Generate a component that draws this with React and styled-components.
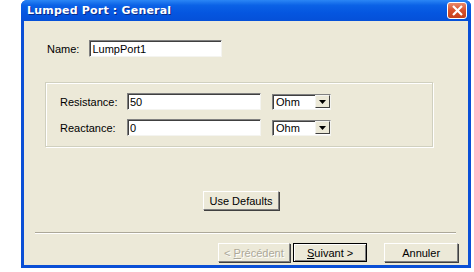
import React from "react";
import styled, { createGlobalStyle } from "styled-components";

const Global = createGlobalStyle`
  html, body {
    margin: 0;
    padding: 0;
    background: #ffffff;
  }
  body {
    font-family: "Liberation Sans", Arial, sans-serif;
    font-size: 11px;
  }
`;

export default function App() {
  return (
    <Page>
      <Global />
      <Window>
        <TitleBar>
          <Title>Lumped Port : General</Title>
          <CloseButton aria-label="Close">
            <svg width="13" height="11" viewBox="0 0 13 11">
              <path d="M2 1 L11 10 M11 1 L2 10" stroke="#fff" strokeWidth="2.2" />
            </svg>
          </CloseButton>
        </TitleBar>

        <Body>
          <NameRow>
            <Label>Name:</Label>
            <TextInput width={133} defaultValue="LumpPort1" />
          </NameRow>

          <GroupBox>
            <FieldRow>
              <Label width={67}>Resistance:</Label>
              <TextInput width={134} defaultValue="50" />
              <Select>
                <span>Ohm</span>
                <DropArrow />
              </Select>
            </FieldRow>
            <FieldRow>
              <Label width={67}>Reactance:</Label>
              <TextInput width={134} defaultValue="0" />
              <Select>
                <span>Ohm</span>
                <DropArrow />
              </Select>
            </FieldRow>
          </GroupBox>

          <CenterRow>
            <Button width={76}>Use Defaults</Button>
          </CenterRow>

          <Separator />

          <Footer>
            <Button width={73} disabled>
              &lt; <u>P</u>récédent
            </Button>
            <Button width={76} primary>
              <u>S</u>uivant &gt;
            </Button>
            <Spacer />
            <Button width={75}>Annuler</Button>
          </Footer>
        </Body>
      </Window>
    </Page>
  );
}

const DropArrow = () => (
  <ArrowBox>
    <svg width="7" height="4" viewBox="0 0 7 4">
      <path d="M0 0 H7 L3.5 4 Z" fill="#000" />
    </svg>
  </ArrowBox>
);

const Page = styled.div`
  width: 474px;
  height: 272px;
  overflow: hidden;
`;

const Window = styled.div`
  margin-left: 21px;
  width: 450px;
  height: 268px;
  display: flex;
  flex-direction: column;
  background: #0a4fd6;
  border-radius: 6px 6px 0 0;
  overflow: hidden;
`;

const TitleBar = styled.div`
  height: 21px;
  display: flex;
  align-items: center;
  justify-content: space-between;
  padding: 0 4px 0 6px;
  background: linear-gradient(
    to bottom,
    #2b86f5 0%,
    #0b62e6 25%,
    #0556e0 60%,
    #0550d8 100%
  );
`;

const Title = styled.span`
  color: #ffffff;
  font-family: "DejaVu Sans", Verdana, sans-serif;
  font-weight: bold;
  font-size: 11px;
  letter-spacing: 0.2px;
  text-shadow: 1px 1px 0 #0a2a8a;
`;

const CloseButton = styled.div`
  width: 20px;
  height: 17px;
  border: 1px solid #ffffff;
  border-radius: 3px;
  background: linear-gradient(to bottom, #e98a6c 0%, #d8502c 50%, #c5401c 100%);
  display: flex;
  align-items: center;
  justify-content: center;
  box-sizing: border-box;
`;

const Body = styled.div`
  flex: 1;
  margin: 0 3px 3px 3px;
  background: #ece9d8;
  display: flex;
  flex-direction: column;
  padding: 19px 0 0 0;
`;

const NameRow = styled.div`
  display: flex;
  align-items: center;
  gap: 10px;
  padding-left: 23px;
`;

const Label = styled.span`
  color: #000;
  width: ${(p) => (p.width ? `${p.width}px` : "auto")};
`;

const TextInput = styled.input`
  width: ${(p) => p.width}px;
  height: 17px;
  box-sizing: border-box;
  padding: 0 2px;
  font-family: "Liberation Sans", Arial, sans-serif;
  font-size: 11px;
  color: #000;
  background: #ffffff;
  border: 1px solid;
  border-color: #808080 #f4f4f0 #f4f4f0 #808080;
  box-shadow: inset 1px 1px 0 #404040;
  outline: none;
`;

const GroupBox = styled.div`
  margin: 25px 0 0 21px;
  width: 388px;
  height: 65px;
  box-sizing: border-box;
  border: 1px solid #d0d0bf;
  box-shadow: inset 1px 1px 0 #ffffff, 1px 1px 0 #ffffff;
  display: flex;
  flex-direction: column;
  gap: 9px;
  padding: 10px 0 0 14px;
`;

const FieldRow = styled.div`
  display: flex;
  align-items: center;
  gap: 0;

  & > input {
    margin-right: 11px;
  }
`;

const Select = styled.div`
  width: 59px;
  height: 16px;
  box-sizing: border-box;
  background: #ffffff;
  border: 1px solid;
  border-color: #808080 #f4f4f0 #f4f4f0 #808080;
  box-shadow: inset 1px 1px 0 #404040;
  display: flex;
  align-items: center;
  justify-content: space-between;
  padding-left: 3px;
  font-size: 11px;
`;

const ArrowBox = styled.div`
  width: 15px;
  height: 13px;
  box-sizing: border-box;
  background: #ece9d8;
  border: 1px solid;
  border-color: #f4f4f0 #404040 #404040 #f4f4f0;
  display: flex;
  align-items: center;
  justify-content: center;
`;

const CenterRow = styled.div`
  display: flex;
  justify-content: flex-start;
  padding-left: 179px;
  margin-top: 44px;
`;

const Button = styled.button`
  width: ${(p) => p.width}px;
  height: 19px;
  box-sizing: border-box;
  padding: 0;
  font-family: "Liberation Sans", Arial, sans-serif;
  font-size: 11px;
  color: ${(p) => (p.disabled ? "#aca899" : "#000")};
  background: #ece9d8;
  border: 1px solid;
  border-color: ${(p) =>
    p.primary ? "#000 #000 #000 #000" : "#ffffff #808080 #808080 #ffffff"};
  box-shadow: ${(p) =>
    p.primary
      ? "inset 1px 1px 0 #ffffff, inset -1px -1px 0 #808080"
      : "1px 1px 0 #404040"};
  text-shadow: ${(p) => (p.disabled ? "1px 1px 0 #ffffff" : "none")};

  & u {
    text-decoration: underline;
  }
`;

const Separator = styled.div`
  margin: 22px 12px 0 11px;
  height: 1px;
  background: #aca899;
  border-bottom: 1px solid #ffffff;
`;

const Footer = styled.div`
  display: flex;
  align-items: center;
  gap: 3px;
  padding: 9px 10px 0 194px;
`;

const Spacer = styled.div`
  width: 11px;
`;
